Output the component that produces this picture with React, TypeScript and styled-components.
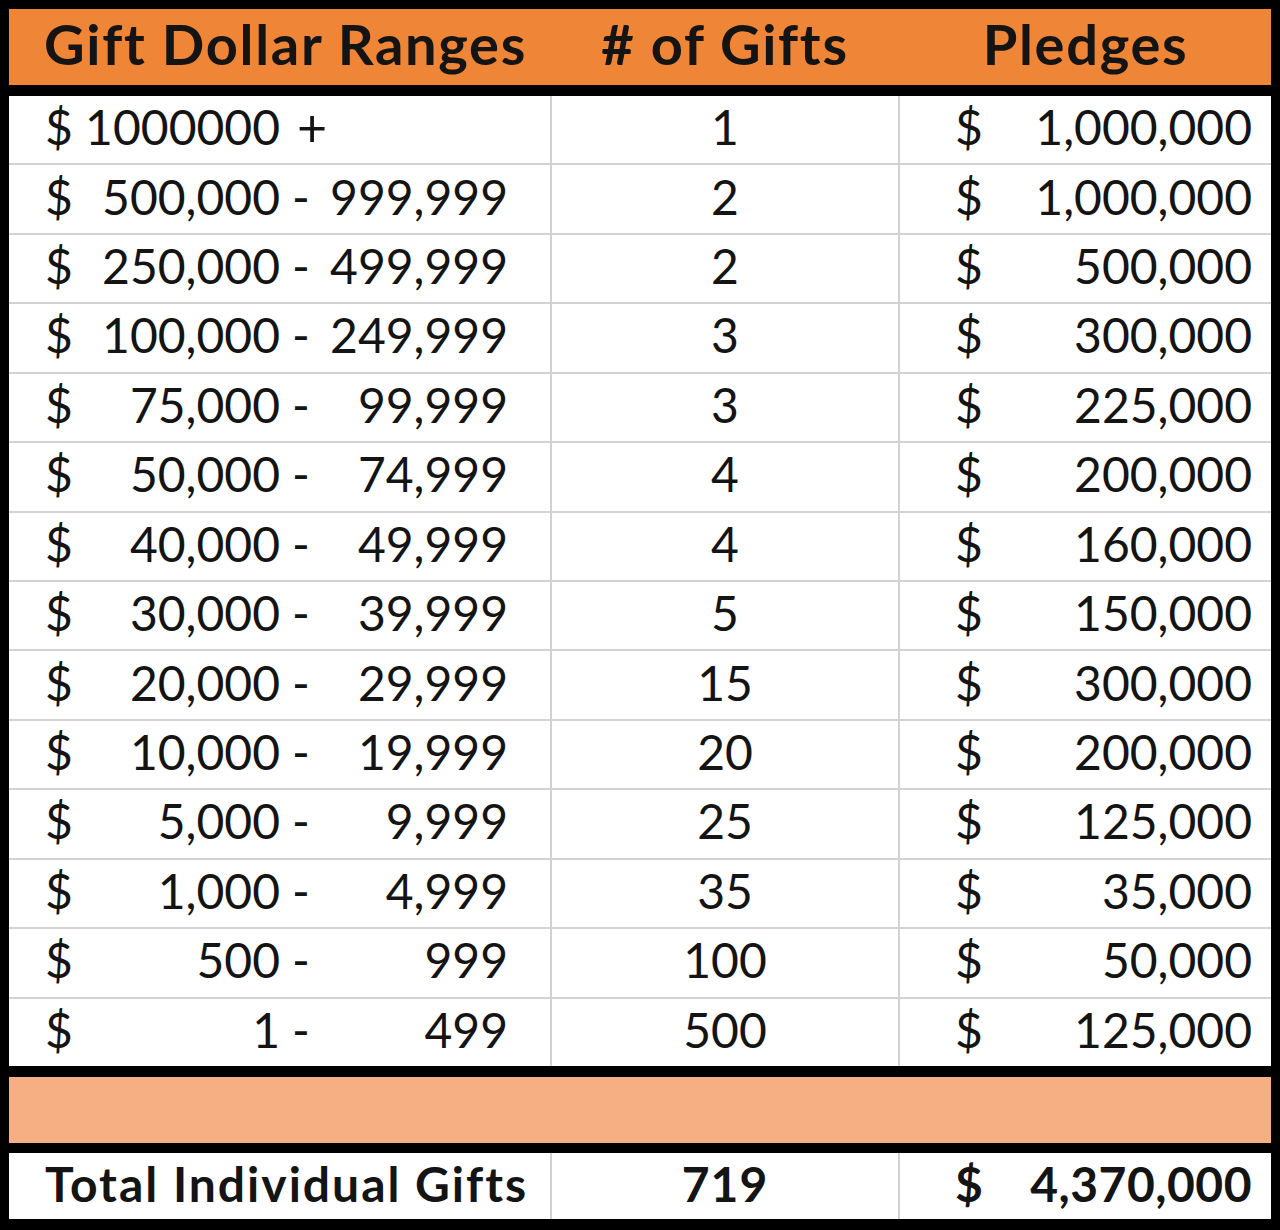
import React from "react";
import styled, { createGlobalStyle } from "styled-components";

const Global = createGlobalStyle`
  html, body { margin: 0; padding: 0; background: #000; }
  body { font-family: Lato, "Open Sans", sans-serif; }
`;

const Frame = styled.div`
  width: 1280px;
  height: 1230px;
  box-sizing: border-box;
  background: #000;
  padding: 9px 9px 11px 9px;
  display: flex;
  flex-direction: column;
  color: #141414;
`;

const HeaderRow = styled.div`
  height: 76px;
  background: #ef8536;
  display: grid;
  grid-template-columns: 541px 350px 1fr;
  align-items: center;
  font-weight: 700;
  font-size: 56px;
  letter-spacing: 1.7px;
  line-height: 1;
`;

const HeaderCell = styled.div<{ $shift?: number }>`
  text-align: center;
  margin-left: ${(p) => p.$shift ?? 0}px;
  padding-bottom: 6px;
`;

const Body = styled.div`
  margin-top: 11px;
  height: 970px;
  background: #d2d2d2;
  display: grid;
  grid-template-columns: 541px 346px 1fr;
  grid-template-rows: repeat(14, 1fr);
  gap: 2px;
`;

const Cell = styled.div`
  background: #fff;
  display: flex;
  align-items: center;
  font-size: 48px;
  line-height: 1;
  padding-bottom: 5px;
  box-sizing: border-box;
`;

const RangeCell = styled(Cell)`
  display: grid;
  grid-template-columns: 40px 195px 42px 186px;
  padding-left: 36px;
  align-items: center;
`;

const Dollar = styled.span``;

const Lower = styled.span`
  text-align: right;
`;

const Sep = styled.span<{ $plus?: boolean }>`
  text-align: ${(p) => (p.$plus ? "left" : "center")};
  padding-left: ${(p) => (p.$plus ? "17px" : "0")};
  font-size: ${(p) => (p.$plus ? "52px" : "48px")};
`;

const Upper = styled.span`
  text-align: right;
`;

const CountCell = styled(Cell)`
  justify-content: center;
`;

const MoneyCell = styled(Cell)`
  justify-content: space-between;
  padding-left: 55px;
  padding-right: 19px;
`;

const Band = styled.div`
  margin-top: 11px;
  height: 66px;
  background: #f5af83;
`;

const TotalRow = styled.div`
  margin-top: 10px;
  height: 66px;
  background: #d2d2d2;
  display: grid;
  grid-template-columns: 541px 346px 1fr;
  gap: 2px;
  font-weight: 700;
`;

const TotalLabel = styled(Cell)`
  padding-left: 36px;
  font-weight: 700;
  letter-spacing: 2px;
`;

const TotalCount = styled(CountCell)`
  font-weight: 700;
  letter-spacing: 1px;
`;

const TotalMoney = styled(MoneyCell)`
  font-weight: 700;
  letter-spacing: 0.5px;
`;

const rows: [string, string, string, string, string][] = [
  ["1000000", "+", "", "1", "1,000,000"],
  ["500,000", "-", "999,999", "2", "1,000,000"],
  ["250,000", "-", "499,999", "2", "500,000"],
  ["100,000", "-", "249,999", "3", "300,000"],
  ["75,000", "-", "99,999", "3", "225,000"],
  ["50,000", "-", "74,999", "4", "200,000"],
  ["40,000", "-", "49,999", "4", "160,000"],
  ["30,000", "-", "39,999", "5", "150,000"],
  ["20,000", "-", "29,999", "15", "300,000"],
  ["10,000", "-", "19,999", "20", "200,000"],
  ["5,000", "-", "9,999", "25", "125,000"],
  ["1,000", "-", "4,999", "35", "35,000"],
  ["500", "-", "999", "100", "50,000"],
  ["1", "-", "499", "500", "125,000"],
];

export default function App() {
  return (
    <>
      <Global />
      <Frame>
        <HeaderRow>
          <HeaderCell $shift={12}>Gift Dollar Ranges</HeaderCell>
          <HeaderCell>#&nbsp;of Gifts</HeaderCell>
          <HeaderCell>Pledges</HeaderCell>
        </HeaderRow>
        <Body>
          {rows.map(([lo, sep, hi, count, amount], i) => (
            <React.Fragment key={i}>
              <RangeCell>
                <Dollar>$</Dollar>
                <Lower>{lo}</Lower>
                <Sep $plus={sep === "+"}>{sep}</Sep>
                <Upper>{hi}</Upper>
              </RangeCell>
              <CountCell>{count}</CountCell>
              <MoneyCell>
                <span>$</span>
                <span>{amount}</span>
              </MoneyCell>
            </React.Fragment>
          ))}
        </Body>
        <Band />
        <TotalRow>
          <TotalLabel>Total Individual Gifts</TotalLabel>
          <TotalCount>719</TotalCount>
          <TotalMoney>
            <span>$</span>
            <span>4,370,000</span>
          </TotalMoney>
        </TotalRow>
      </Frame>
    </>
  );
}
